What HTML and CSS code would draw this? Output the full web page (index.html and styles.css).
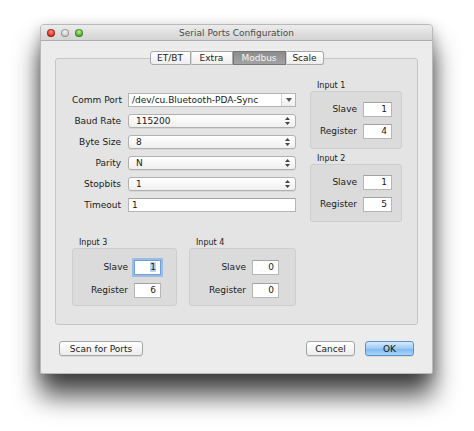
FILE: index.html
```html
<!DOCTYPE html>
<html lang="en">
<head>
    <meta charset="UTF-8">
    <title>Serial Ports Configuration</title>
    <link rel="stylesheet" href="styles.css">
</head>
<body>
    <div class="window">
        <div class="titlebar">
            <div class="lights">
                <span class="light red"></span>
                <span class="light yellow"></span>
                <span class="light green"></span>
            </div>
            <div class="title">Serial Ports Configuration</div>
            <div></div>
        </div>

        <div class="tabview">
            <div class="tabs">
                <span class="tab">ET/BT</span><span class="tab">Extra</span><span class="tab active">Modbus</span><span class="tab">Scale</span>
            </div>
            <div class="pane">
                <div class="top-row">
                    <div class="form">
                        <label>Comm Port</label>
                        <div class="combo">
                            <span class="combo-text">/dev/cu.Bluetooth-PDA-Sync</span>
                            <span class="combo-btn"><svg width="6" height="4" viewBox="0 0 6 4"><path d="M0 0H6L3 4Z" fill="#555"/></svg></span>
                        </div>
                        <label>Baud Rate</label>
                        <div class="popup"><span>115200</span><svg class="updown" width="5" height="8" viewBox="0 0 5 8"><path d="M0 3H5L2.5 0Z M0 5H5L2.5 8Z" fill="#444"/></svg></div>
                        <label>Byte Size</label>
                        <div class="popup"><span>8</span><svg class="updown" width="5" height="8" viewBox="0 0 5 8"><path d="M0 3H5L2.5 0Z M0 5H5L2.5 8Z" fill="#444"/></svg></div>
                        <label>Parity</label>
                        <div class="popup"><span>N</span><svg class="updown" width="5" height="8" viewBox="0 0 5 8"><path d="M0 3H5L2.5 0Z M0 5H5L2.5 8Z" fill="#444"/></svg></div>
                        <label>Stopbits</label>
                        <div class="popup"><span>1</span><svg class="updown" width="5" height="8" viewBox="0 0 5 8"><path d="M0 3H5L2.5 0Z M0 5H5L2.5 8Z" fill="#444"/></svg></div>
                        <label>Timeout</label>
                        <div class="field wide">1</div>
                    </div>

                    <div class="side">
                        <div class="group">
                            <div class="group-title">Input 1</div>
                            <div class="group-box">
                                <label>Slave</label><div class="field num">1</div>
                                <label>Register</label><div class="field num">4</div>
                            </div>
                        </div>
                        <div class="group second">
                            <div class="group-title">Input 2</div>
                            <div class="group-box">
                                <label>Slave</label><div class="field num">1</div>
                                <label>Register</label><div class="field num">5</div>
                            </div>
                        </div>
                    </div>
                </div>

                <div class="bottom-row">
                    <div class="group g3">
                        <div class="group-title">Input 3</div>
                        <div class="group-box">
                            <label>Slave</label><div class="field num focus"><span class="sel">1</span></div>
                            <label>Register</label><div class="field num">6</div>
                        </div>
                    </div>
                    <div class="group g4">
                        <div class="group-title">Input 4</div>
                        <div class="group-box">
                            <label>Slave</label><div class="field num">0</div>
                            <label>Register</label><div class="field num">0</div>
                        </div>
                    </div>
                </div>
            </div>
        </div>

        <div class="buttons">
            <button class="btn scan">Scan for Ports</button>
            <span class="spacer"></span>
            <button class="btn cancel">Cancel</button>
            <button class="btn ok">OK</button>
        </div>
    </div>
</body>
</html>
```

FILE: styles.css
```css
html {
    background: #ffffff;
}

body {
    margin: 0;
    padding: 24px 0 0 40px;
    min-height: 431px;
    box-sizing: border-box;
    font-family: "DejaVu Sans", "Liberation Sans", sans-serif;
    font-size: 9px;
    color: #1a1a1a;
}

.window {
    width: 393px;
    height: 350px;
    background: #ececec;
    border: 1px solid #b9b9b9;
    border-radius: 4px 4px 2px 2px;
    box-shadow: 0 22px 26px rgba(0, 0, 0, 0.7), 0 4px 14px rgba(0, 0, 0, 0.25);
    box-sizing: border-box;
}

/* title bar */
.titlebar {
    height: 16px;
    display: grid;
    grid-template-columns: 1fr auto 1fr;
    align-items: center;
    background: linear-gradient(#ececec, #d4d4d4);
    border-bottom: 1px solid #adadad;
    border-radius: 3px 3px 0 0;
    box-sizing: border-box;
}

.lights {
    display: flex;
    gap: 6px;
    padding-left: 6px;
}

.light {
    width: 8px;
    height: 8px;
    border-radius: 50%;
    box-shadow: inset 0 0 0 1px rgba(0, 0, 0, 0.25);
}

.red { background: radial-gradient(circle at 50% 35%, #ff8a80, #d0231b 70%); }
.yellow { background: radial-gradient(circle at 50% 35%, #f4f4f4, #c4c4c4 70%); }
.green { background: radial-gradient(circle at 50% 35%, #b8f08a, #3fa427 70%); }

.title {
    color: #4a4a4a;
    font-size: 9px;
}

/* tabs */
.tabview {
    margin: 10px 14px 0;
}

.tabs {
    display: flex;
    justify-content: center;
    position: relative;
    z-index: 1;
}

.tab {
    height: 14px;
    line-height: 13px;
    box-sizing: border-box;
    text-align: center;
    background: linear-gradient(#ffffff, #ededed);
    border: 1px solid #a8a8a8;
    border-left: 1px solid #d6d6d6;
    color: #222;
}

.tab:nth-child(1) { width: 41px; border-left: 1px solid #a8a8a8; border-radius: 3px 0 0 3px; }
.tab:nth-child(2) { width: 42px; }
.tab:nth-child(3) { width: 53px; }
.tab:nth-child(4) { width: 38px; border-radius: 0 3px 3px 0; }

.tab.active {
    background: linear-gradient(#8c8c8c, #a3a3a3);
    border-color: #777;
    color: #f4f4f4;
}

.pane {
    margin-top: -7px;
    height: 267px;
    box-sizing: border-box;
    border: 1px solid #c6c6c6;
    border-radius: 3px;
    background: #e4e4e4;
    padding: 22px 0 0 16px;
}

.top-row {
    display: flex;
}

/* left form */
.form {
    margin-top: 12px;
    display: grid;
    grid-template-columns: 49px 168px;
    grid-auto-rows: 14px;
    column-gap: 7px;
    row-gap: 7px;
}

.form label {
    text-align: right;
    line-height: 14px;
    white-space: nowrap;
}

.combo {
    display: flex;
    background: #fff;
    border: 1px solid #b4b4b4;
    box-sizing: border-box;
}

.combo-text {
    flex: 1;
    padding-left: 3px;
    line-height: 12px;
}

.combo-btn {
    width: 13px;
    border-left: 1px solid #d2d2d2;
    background: linear-gradient(#ffffff, #eeeeee);
    display: flex;
    align-items: center;
    justify-content: center;
}

.popup {
    display: flex;
    align-items: center;
    justify-content: space-between;
    padding: 0 5px 0 7px;
    background: linear-gradient(#ffffff, #efefef);
    border: 1px solid #b0b0b0;
    border-radius: 3px;
    box-sizing: border-box;
    box-shadow: 0 1px 0 rgba(0, 0, 0, 0.06);
}

.field {
    background: #fff;
    border: 1px solid #b6b6b6;
    border-top-color: #a2a2a2;
    box-sizing: border-box;
    line-height: 13px;
}

.field.wide {
    padding-left: 3px;
}

.field.num {
    text-align: right;
    padding-right: 4px;
}

.field.focus {
    border-color: #6f9fd8;
    box-shadow: 0 0 0 2px rgba(110, 160, 225, 0.55);
}

.sel {
    background: #b6d4f5;
}

/* groups */
.side {
    margin-left: 14px;
    width: 92px;
}

.group-title {
    height: 10px;
    line-height: 10px;
    font-size: 8px;
    padding-left: 7px;
}

.group.second {
    margin-top: 5px;
}

.group-box {
    height: 58px;
    box-sizing: border-box;
    background: #dbdbdb;
    border: 1px solid #cdcdcd;
    border-radius: 3px;
    padding: 10px 9px 0 0;
    display: grid;
    grid-template-columns: 1fr 29px;
    grid-auto-rows: 15px;
    column-gap: 6px;
    row-gap: 7px;
}

.group-box label {
    text-align: right;
    line-height: 15px;
}

.bottom-row {
    display: flex;
    gap: 12px;
    margin-top: 16px;
}

.g3 { width: 105px; }
.g4 { width: 107px; }

.g3 .group-box,
.g4 .group-box {
    grid-template-columns: 1fr 27px;
    padding-right: 15px;
    padding-top: 11px;
    row-gap: 8px;
}

.g4 .group-box {
    padding-right: 16px;
}

/* bottom buttons */
.buttons {
    display: flex;
    gap: 10px;
    padding: 16px 18px 0;
}

.spacer {
    flex: 1;
}

.btn {
    height: 15px;
    padding: 0;
    font-family: inherit;
    font-size: 9px;
    color: #222;
    background: linear-gradient(#ffffff, #ececec);
    border: 1px solid #a6a6a6;
    border-radius: 3px;
    box-shadow: 0 1px 0 rgba(0, 0, 0, 0.08);
}

.scan { width: 84px; }
.cancel { width: 49px; }

.ok {
    width: 49px;
    background: linear-gradient(#d6ebfd, #9ccbf5 50%, #7cb8ef 51%, #a9d4f8);
    border-color: #5d8fc6;
    color: #111;
}
```
